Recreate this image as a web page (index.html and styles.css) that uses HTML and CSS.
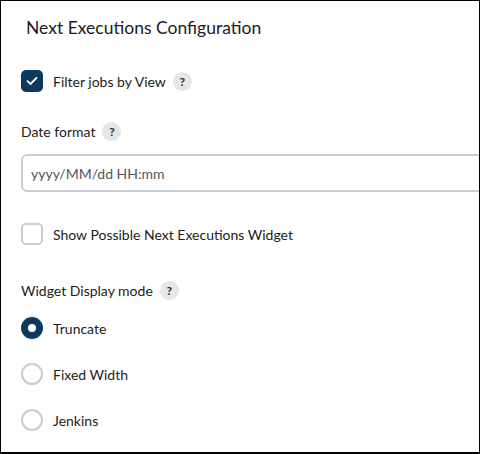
FILE: index.html
```html
<!DOCTYPE html>
<html>
<head>
<meta charset="utf-8">
<link rel="stylesheet" href="styles.css">
</head>
<body>
<div class="frame">
  <h2 class="title">Next Executions Configuration</h2>

  <div class="check-row first">
    <span class="box checked">
      <svg width="12" height="10" viewBox="0 0 12 10"><path d="M1.5 5.2 L4.5 8 L10.5 1.8" fill="none" stroke="#fff" stroke-width="1.8" stroke-linecap="round" stroke-linejoin="round"/></svg>
    </span>
    <span class="label">Filter jobs by View</span>
    <span class="help">?</span>
  </div>

  <div class="field-label date">
    <span>Date format</span>
    <span class="help">?</span>
  </div>
  <div class="input"><span class="placeholder">yyyy/MM/dd HH:mm</span></div>

  <div class="check-row second">
    <span class="box"></span>
    <span class="label">Show Possible Next Executions Widget</span>
  </div>

  <div class="field-label widget">
    <span>Widget Display mode</span>
    <span class="help">?</span>
  </div>

  <div class="radio-row r1"><span class="radio on"></span><span class="label">Truncate</span></div>
  <div class="radio-row r2"><span class="radio"></span><span class="label">Fixed Width</span></div>
  <div class="radio-row r3"><span class="radio"></span><span class="label">Jenkins</span></div>
</div>
</body>
</html>
```

FILE: styles.css
```css
html, body {
  margin: 0;
  padding: 0;
  background: #fff;
}
.frame {
  box-sizing: border-box;
  width: 480px;
  height: 454px;
  border: 1px solid #000;
  border-bottom-width: 2px;
  padding-left: 20px;
  font-family: Lato, "Noto Sans", sans-serif;
  color: #1c1c22;
  display: flex;
  flex-direction: column;
  overflow: hidden;
}
.title {
  margin: 15px 0 0 5px;
  font-size: 17.5px;
  line-height: 24px;
  font-weight: 400;
}
.check-row, .radio-row, .field-label {
  display: flex;
  align-items: center;
  font-size: 14px;
  font-weight: 400;
}
.check-row { height: 22px; }
.check-row.first { margin-top: 30px; }
.check-row.second { margin-top: 31px; }
.box {
  box-sizing: border-box;
  width: 22px;
  height: 22px;
  border: 2px solid #c6ced3;
  border-radius: 5px;
  display: flex;
  align-items: center;
  justify-content: center;
  flex: none;
}
.box.checked {
  background: #0d3a5c;
  border-color: #0d3a5c;
}
.label { margin-left: 10px; }
.help {
  width: 19px;
  height: 19px;
  border-radius: 50%;
  background: #e6e6e6;
  color: #2a2a30;
  font-size: 12px;
  font-weight: 700;
  display: flex;
  align-items: center;
  justify-content: center;
  margin-left: 7px;
  flex: none;
}
.field-label { height: 22px; }
.field-label.date { margin-top: 28px; }
.field-label.widget { margin-top: 34px; }
.input {
  box-sizing: border-box;
  margin-top: 12px;
  height: 38px;
  width: 470px;
  border: 2px solid #c6ced3;
  border-radius: 6px;
  display: flex;
  align-items: center;
  padding-left: 8px;
  font-size: 14px;
}
.placeholder { color: #55555c; }
.radio-row { height: 22px; }
.radio-row.r1 { margin-top: 16px; }
.radio-row.r2, .radio-row.r3 { margin-top: 24px; }
.radio {
  box-sizing: border-box;
  width: 22px;
  height: 22px;
  border-radius: 50%;
  border: 2px solid #c6ced3;
  flex: none;
}
.radio.on {
  border: 7.5px solid #0d3a5c;
  background: #fff;
}
```
